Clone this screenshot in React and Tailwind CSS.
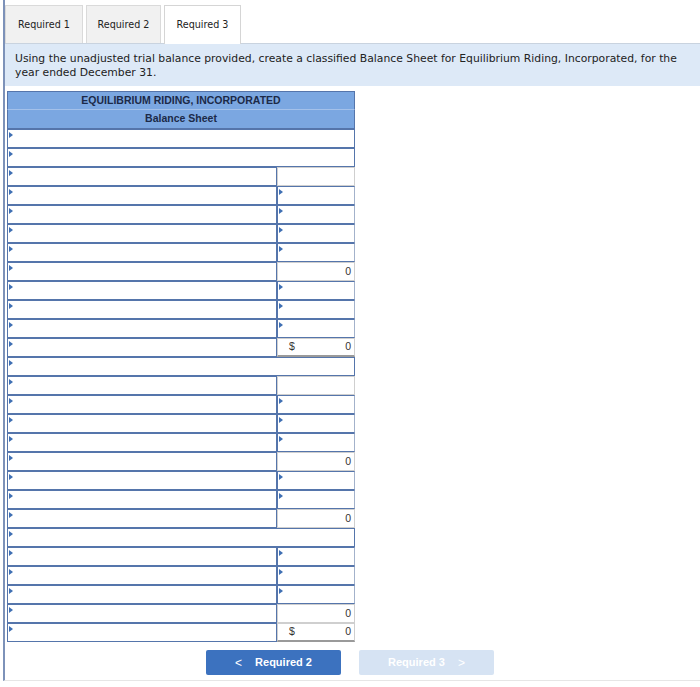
import React from "react";

const rows = [
  "full", "full", "blank", "in", "in", "in", "in", "zero", "in", "in", "in", "dollar",
  "full", "blank", "in", "in", "in", "zero", "in", "in", "zero",
  "full", "in", "in", "in", "zero", "dollar",
];

function Arrow() {
  return (
    <span className="absolute left-[1px] top-[2px] w-0 h-0 border-y-[3px] border-y-transparent border-l-[4px] border-l-[#3f6fb3]" />
  );
}

function Row({ type }) {
  if (type === "full") {
    return (
      <div className="flex h-[19px]">
        <div className="relative w-[348px] h-full border border-[#5575ab] bg-white">
          <Arrow />
        </div>
      </div>
    );
  }
  let right;
  if (type === "in") {
    right = (
      <div className="relative w-[78px] h-full border border-[#5575ab] border-r-[#a3b2cb] bg-white">
        <Arrow />
      </div>
    );
  } else if (type === "blank") {
    right = <div className="w-[78px] h-full border border-[#cfcfcf] bg-white" />;
  } else if (type === "zero") {
    right = (
      <div className="w-[78px] h-full border border-[#cfcfcf] bg-white flex items-center justify-end pr-[3px] text-[10.5px] text-[#333]">
        0
      </div>
    );
  } else {
    right = (
      <div className="w-[78px] h-full border border-[#cfcfcf] border-b-2 border-b-[#9a9a9a] bg-white flex items-center justify-between pl-[11px] pr-[3px] text-[10.5px] text-[#333]">
        <span>$</span>
        <span>0</span>
      </div>
    );
  }
  return (
    <div className="flex h-[19px]">
      <div className="relative w-[270px] h-full border border-[#5575ab] bg-white">
        <Arrow />
      </div>
      {right}
    </div>
  );
}

export default function App() {
  return (
    <div className="w-[700px] h-[687px] bg-white overflow-hidden" style={{ fontFamily: '"Liberation Sans", Arial, sans-serif' }}>
      <div className="ml-[3px] h-[681px] border-l-2 border-[#7d92b9] border-b border-b-[#e6e6e6]">
        {/* Tabs */}
        <div className="flex pt-[5px] gap-[3px] text-[9.6px] text-[#222]" style={{ fontFamily: '"DejaVu Sans", Verdana, sans-serif' }}>
          <div className="w-[78px] h-[38px] flex items-center justify-center pt-[2px] bg-[#f1f1f1] border border-[#dadada] border-b-0">Required 1</div>
          <div className="w-[75px] h-[38px] flex items-center justify-center pt-[2px] bg-[#f1f1f1] border border-[#dadada] border-b-0">Required 2</div>
          <div className="relative z-10 w-[77px] h-[39px] -mb-px flex items-center justify-center pt-[1px] bg-white border border-[#d5d5d5] border-b-0">Required 3</div>
        </div>
        {/* Instructions */}
        <div className="h-[43px] bg-[#dde9f7] border-t border-[#c9d3df] pl-[10px] pt-[8px] text-[10.8px] leading-[13.5px] text-[#222] whitespace-nowrap" style={{ fontFamily: '"DejaVu Sans", Verdana, sans-serif' }}>
          Using the unadjusted trial balance provided, create a classified Balance Sheet for Equilibrium Riding, Incorporated, for the
          <br />
          year ended December 31.
        </div>
        {/* Table */}
        <div className="ml-[2px] mt-[5px] w-[348px]">
          <div className="h-[19px] bg-[#7ba7e1] border border-[#5575ab] border-b-[#a4c1ea] flex items-center justify-center text-[10.5px] font-bold text-[#1c2a48]">
            EQUILIBRIUM RIDING, INCORPORATED
          </div>
          <div className="h-[19px] bg-[#7ba7e1] border border-t-0 border-[#5575ab] flex items-center justify-center text-[10.5px] font-bold text-[#1c2a48]">
            Balance Sheet
          </div>
          {rows.map((t, i) => (
            <Row key={i} type={t} />
          ))}
        </div>
        {/* Buttons */}
        <div className="flex gap-[18px] pl-[201px] mt-[8px]">
          <div className="w-[135px] h-[25px] bg-[#3c72bf] rounded-[2px] flex items-center justify-center gap-[13px] text-white text-[11px] font-bold">
            <span className="text-[12px] font-normal">&lt;</span>
            <span>Required 2</span>
          </div>
          <div className="w-[135px] h-[25px] bg-[#d6e3f3] rounded-[2px] flex items-center justify-center gap-[13px] text-white text-[11px] font-bold">
            <span>Required 3</span>
            <span className="text-[12px] font-normal">&gt;</span>
          </div>
        </div>
      </div>
    </div>
  );
}
